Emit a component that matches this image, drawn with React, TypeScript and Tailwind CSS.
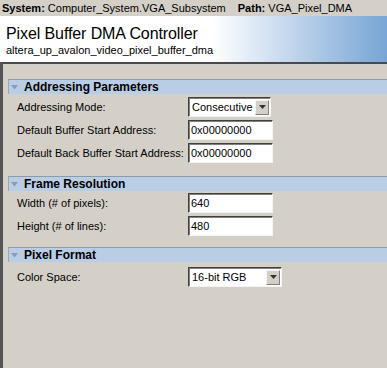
import React from 'react';

const font = "font-['Liberation_Sans',Arial,sans-serif]";

const SectionHeader: React.FC<{ title: string }> = ({ title }) => (
  <div className="ml-[5px] h-[15px] flex items-center bg-[#b9cde5] border-t border-[#8e9aa6] border-l border-l-[#9aa8b6]">
    <svg width="7" height="5" viewBox="0 0 7 5" className="ml-[2px]">
      <path d="M0 0 L7 0 L3.5 4.5 Z" fill="#8b9cb0" />
    </svg>
    <span className="ml-[6px] text-[12px] font-bold text-black leading-none">{title}</span>
  </div>
);

const Field: React.FC<{ value: string }> = ({ value }) => (
  <div className="w-[85px] h-[20px] bg-white border border-t-[#404040] border-l-[#404040] border-r-[#f4f4f4] border-b-[#f4f4f4] shadow-[inset_1px_1px_0_#808080] flex items-center px-[2px] text-[11px] text-black">
    {value}
  </div>
);

const Select: React.FC<{ value: string; width: string }> = ({ value, width }) => (
  <div className={`${width} h-[20px] bg-white border border-t-[#404040] border-l-[#404040] border-r-[#f4f4f4] border-b-[#f4f4f4] shadow-[inset_1px_1px_0_#808080] flex items-center pl-[3px] pr-[1px] text-[11px] text-black`}>
    <span className="flex-1">{value}</span>
    <div className="w-[14px] h-[15px] bg-[#d4d0c8] border border-t-[#f4f4f4] border-l-[#f4f4f4] border-r-[#808080] border-b-[#808080] flex items-center justify-center">
      <svg width="7" height="4" viewBox="0 0 7 4">
        <path d="M0 0 L7 0 L3.5 4 Z" fill="#333" />
      </svg>
    </div>
  </div>
);

const Row: React.FC<{ label: string; children: React.ReactNode }> = ({ label, children }) => (
  <div className="flex items-center h-[20px]">
    <span className="w-[185px] shrink-0 pl-[14px] text-[11px] text-black whitespace-nowrap">{label}</span>
    {children}
  </div>
);

export default function App() {
  return (
    <div className={`w-full h-screen flex flex-col bg-[#d4d0c8] overflow-hidden ${font}`}>
      {/* system path bar */}
      <div className="h-[16px] flex items-center gap-[12px] px-[2px] text-[11px] text-black whitespace-nowrap">
        <span><b>System:</b> Computer_System.VGA_Subsystem</span>
        <span><b>Path:</b> VGA_Pixel_DMA</span>
      </div>

      {/* title banner */}
      <div className="h-[46px] px-[6px] pt-[8px] bg-gradient-to-r from-white from-55% to-[#78a4d4]">
        <div className="text-[16px] leading-[20px] tracking-[-0.1px] text-black">Pixel Buffer DMA Controller</div>
        <div className="text-[11px] leading-[13px] text-black">altera_up_avalon_video_pixel_buffer_dma</div>
      </div>

      {/* parameter panel */}
      <div className="flex-1 border-t-2 border-[#4a4a4a] border-l-[3px] border-l-[#555] pt-[15px]">
        <SectionHeader title="Addressing Parameters" />
        <div className="flex flex-col gap-[3px] pt-[3px]">
          <Row label="Addressing Mode:">
            <Select value="Consecutive" width="w-[83px]" />
          </Row>
          <Row label="Default Buffer Start Address:">
            <Field value="0x00000000" />
          </Row>
          <Row label="Default Back Buffer Start Address:">
            <Field value="0x00000000" />
          </Row>
        </div>

        <div className="mt-[13px]">
          <SectionHeader title="Frame Resolution" />
        </div>
        <div className="flex flex-col gap-[3px] pt-[2px]">
          <Row label="Width (# of pixels):">
            <Field value="640" />
          </Row>
          <Row label="Height (# of lines):">
            <Field value="480" />
          </Row>
        </div>

        <div className="mt-[11px]">
          <SectionHeader title="Pixel Format" />
        </div>
        <div className="pt-[5px]">
          <Row label="Color Space:">
            <Select value="16-bit RGB" width="w-[94px]" />
          </Row>
        </div>
      </div>
    </div>
  );
}
